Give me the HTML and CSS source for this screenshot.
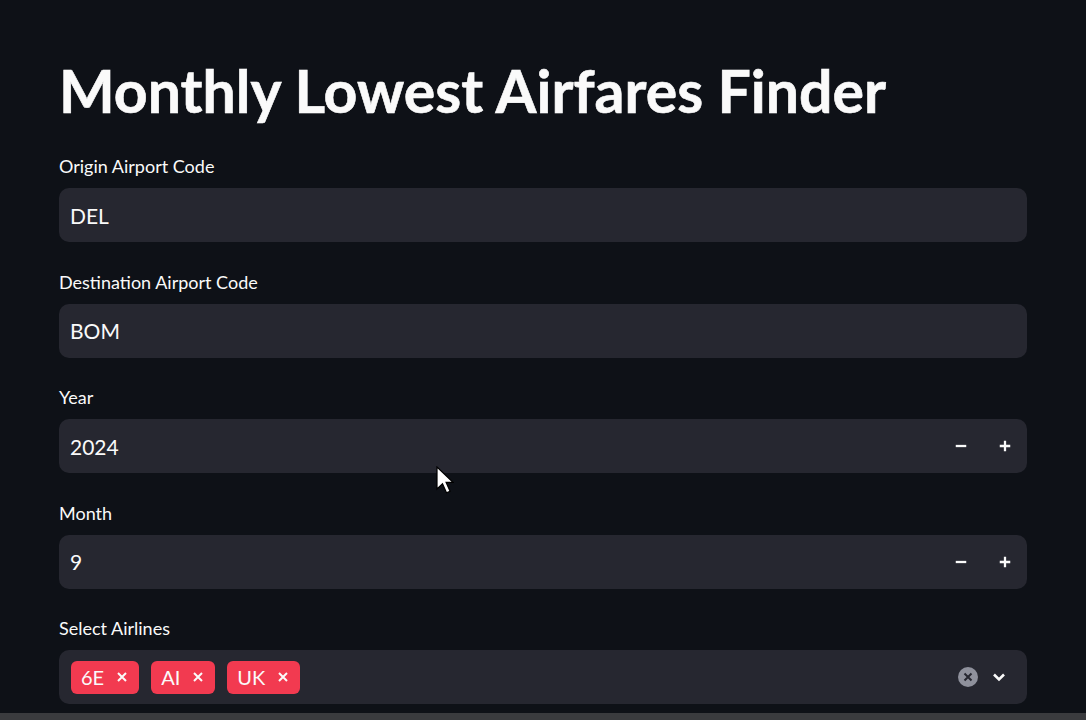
FILE: index.html
```html
<!DOCTYPE html>
<html lang="en">

<head>
    <meta charset="utf-8">
    <meta name="viewport" content="width=device-width, initial-scale=1">
    <title>Monthly Lowest Airfares Finder</title>
    <link rel="stylesheet" href="styles.css">
</head>

<body>
    <div class="app">
        <main class="block">
            <h1 class="title">Monthly Lowest Airfares Finder</h1>

            <div class="field">
                <label class="field-label">Origin Airport Code</label>
                <div class="input"><span class="input-value">DEL</span></div>
            </div>

            <div class="field">
                <label class="field-label">Destination Airport Code</label>
                <div class="input"><span class="input-value">BOM</span></div>
            </div>

            <div class="field">
                <label class="field-label">Year</label>
                <div class="input input--number">
                    <span class="input-value">2024</span>
                    <button class="step" aria-label="Decrement">
                        <svg viewBox="0 0 16 16" width="16" height="16"><path d="M2 8h12" /></svg>
                    </button>
                    <button class="step" aria-label="Increment">
                        <svg viewBox="0 0 16 16" width="16" height="16"><path d="M2 8h12M8 2v12" /></svg>
                    </button>
                </div>
            </div>

            <div class="field">
                <label class="field-label">Month</label>
                <div class="input input--number">
                    <span class="input-value">9</span>
                    <button class="step" aria-label="Decrement">
                        <svg viewBox="0 0 16 16" width="16" height="16"><path d="M2 8h12" /></svg>
                    </button>
                    <button class="step" aria-label="Increment">
                        <svg viewBox="0 0 16 16" width="16" height="16"><path d="M2 8h12M8 2v12" /></svg>
                    </button>
                </div>
            </div>

            <div class="field">
                <label class="field-label">Select Airlines</label>
                <div class="input input--select">
                    <div class="tags">
                        <span class="tag">6E<svg class="tag-x" viewBox="0 0 12 12"><path d="M2 2l8 8M10 2l-8 8" /></svg></span>
                        <span class="tag">AI<svg class="tag-x" viewBox="0 0 12 12"><path d="M2 2l8 8M10 2l-8 8" /></svg></span>
                        <span class="tag">UK<svg class="tag-x" viewBox="0 0 12 12"><path d="M2 2l8 8M10 2l-8 8" /></svg></span>
                    </div>
                    <svg class="clear" viewBox="0 0 20 20"><circle cx="10" cy="10" r="10" /><path d="M6.5 6.5l7 7M13.5 6.5l-7 7" /></svg>
                    <svg class="chevron" viewBox="0 0 16 16"><path d="M3 5.5l5 5 5-5" /></svg>
                </div>
            </div>
        </main>
        <div class="statusbar"></div>
    </div>

    <svg class="cursor" viewBox="0 0 18 28" width="18" height="28">
        <path d="M1 1v22l5.5-5.2 4 9 3.6-1.6-4-8.8H17z" />
    </svg>
</body>

</html>
```

FILE: styles.css
```css
html {
    box-sizing: border-box;
    height: 100%;
}

*,
*:before,
*:after {
    box-sizing: inherit;
}

body {
    margin: 0;
    height: 100%;
    background: #0e1117;
    color: #fafafa;
    font-family: Lato, "Noto Sans", sans-serif;
    overflow: hidden;
}

.app {
    display: flex;
    flex-direction: column;
    height: 100vh;
}

.block {
    flex: 1;
    overflow: hidden;
    padding: 55px 59px 0;
}

.title {
    margin: 0 0 26px;
    font-size: 59px;
    line-height: 72px;
    font-weight: 700;
    -webkit-text-stroke: 0.6px #fafafa;
}

.field {
    display: flex;
    flex-direction: column;
    gap: 9px;
    margin-bottom: 26.5px;
}

.field-label {
    font-size: 18px;
    line-height: 26px;
}

.input {
    display: flex;
    align-items: center;
    height: 54px;
    width: 968px;
    padding-left: 11px;
    background: #262730;
    border-radius: 10px;
}

.input-value {
    flex: 1;
    font-size: 21px;
}

.step {
    display: flex;
    align-items: center;
    justify-content: center;
    width: 44px;
    height: 54px;
    padding: 0;
    border: 0;
    background: none;
    stroke: #fafafa;
    stroke-width: 2.6;
    fill: none;
}

.step svg {
    width: 14px;
    height: 14px;
}

.input--select {
    padding-left: 12px;
    padding-right: 20px;
}

.tags {
    flex: 1;
    display: flex;
    gap: 12px;
}

.tag {
    display: flex;
    align-items: center;
    gap: 12px;
    height: 33px;
    padding: 0 11px 0 10px;
    background: #f23a50;
    border-radius: 6px;
    font-size: 20px;
}

.tag-x {
    width: 12px;
    height: 12px;
    stroke: #fafafa;
    stroke-width: 2;
}

.clear {
    width: 20px;
    height: 20px;
    margin-right: 13px;
}

.clear circle {
    fill: #8f919c;
}

.clear path {
    stroke: #262730;
    stroke-width: 2;
}

.chevron {
    width: 16px;
    height: 16px;
    fill: none;
    stroke: #fafafa;
    stroke-width: 2.6;
}

.statusbar {
    height: 7px;
    background: #3a3b3e;
}

.cursor {
    position: absolute;
    left: 436px;
    top: 466px;
    fill: #fff;
    stroke: #000;
    stroke-width: 1.2;
}
```
